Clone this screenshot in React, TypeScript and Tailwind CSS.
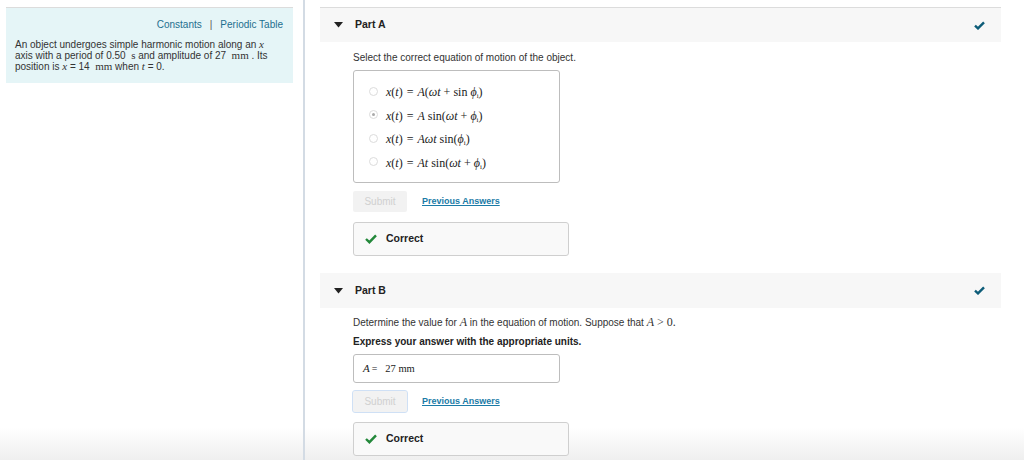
import React from "react";

const M = ({ children }: { children: React.ReactNode }) => (
  <span className="font-['Liberation_Serif','DejaVu_Serif',serif] text-[12px]">{children}</span>
);
const I = ({ children }: { children: React.ReactNode }) => <i>{children}</i>;
const Eq = () => <span className="mx-[4px]">=</span>;
const Plus = () => <span className="mx-[3px]">+</span>;

const Tri = () => (
  <svg width="9" height="6" viewBox="0 0 9 6" className="block">
    <path d="M0 0 L9 0 L4.5 5.5 Z" fill="#222" />
  </svg>
);

const TealCheck = () => (
  <svg width="11" height="9" viewBox="0 0 11 9" className="block">
    <path d="M1 4.6 L4 7.4 L10 1.4" fill="none" stroke="#0d5c78" strokeWidth="2.4" />
  </svg>
);

const GreenCheck = () => (
  <svg width="12" height="10" viewBox="0 0 12 10" className="block">
    <path d="M1 5 L4.4 8.2 L11 1.4" fill="none" stroke="#23883a" strokeWidth="2.4" />
  </svg>
);

const Radio = ({ checked }: { checked?: boolean }) => (
  <span className="inline-flex h-[9px] w-[9px] items-center justify-center rounded-full border border-[#dcdcdc] bg-white">
    {checked && <span className="h-[3px] w-[3px] rounded-full bg-[#aaa]" />}
  </span>
);

const PartHeader = ({ label, border }: { label: string; border?: boolean }) => (
  <div
    className={`flex h-[35px] items-center bg-[#f7f7f7] pl-[14px] pr-[16px] ${
      border ? "border-t border-[#dcdcdc]" : ""
    }`}
  >
    <Tri />
    <span className="ml-[12px] text-[10.5px] font-bold text-[#222]">{label}</span>
    <span className="ml-auto">
      <TealCheck />
    </span>
  </div>
);

const SubmitRow = ({ focus }: { focus?: boolean }) => (
  <div className="mt-[8px] flex items-center">
    <div
      className={`flex h-[21px] w-[54px] items-center justify-center rounded-[2px] bg-[#f2f2f2] text-[10px] text-[#d0d0d0] ${
        focus ? "outline outline-1 outline-[#cfe0f5]" : ""
      }`}
    >
      Submit
    </div>
    <span className="ml-[15px] text-[9px] font-bold text-[#1b7ba7] underline">Previous Answers</span>
  </div>
);

const CorrectBox = () => (
  <div className="mt-[10px] flex h-[34px] w-[216px] items-center rounded-[3px] border border-[#cfcfcf] bg-[#f9f9f9] pl-[11px]">
    <GreenCheck />
    <span className="ml-[9px] text-[10.5px] font-bold text-[#222]">Correct</span>
  </div>
);

const serif = "font-['Liberation_Serif',serif] text-[11px]";

export default function App() {
  return (
    <div className="flex h-[460px] w-[1024px] overflow-hidden bg-[linear-gradient(to_bottom,#ffffff_0,#ffffff_428px,#efefef_460px)] font-['Liberation_Sans',Arial,sans-serif] text-[#333]">
      <div className="w-[303px] shrink-0 pl-[6px] pr-[10px] pt-[7px]">
        <div className="border-t border-[#dcdcdc] bg-[#e5f5f7] pb-[11px] pl-[9px] pr-[10px] pt-[9px]">
          <div className="flex justify-end text-[10px] text-[#1e6f8e]">
            <span>Constants</span>
            <span className="mx-[8px] text-[#555]">|</span>
            <span>Periodic Table</span>
          </div>
          <div className="mt-[7px] text-[10px] leading-[11px] text-[#333]">
            An object undergoes simple harmonic motion along an <span className={`${serif} italic`}>x</span>
            <br />
            axis with a period of 0.50 <span className={serif}>&nbsp;s</span> and amplitude of 27{" "}
            <span className={serif}>&nbsp;mm</span> . Its
            <br />
            position is <span className={`${serif} italic`}>x</span> = 14 <span className={serif}>&nbsp;mm</span> when{" "}
            <span className={`${serif} italic`}>t</span> = 0.
          </div>
        </div>
      </div>
      <div className="w-[2px] shrink-0 bg-[#d3dbe4]" />
      <div className="flex-1 pl-[15px] pr-[23px] pt-[7px]">
        <PartHeader label="Part A" border />
        <div className="pl-[33px]">
          <div className="mt-[8px] text-[10px] text-[#333]">Select the correct equation of motion of the object.</div>
          <div className="mt-[5px] flex h-[113px] w-[207px] flex-col justify-center gap-[5.5px] rounded-[3px] border border-[#bdbdbd] pl-[15px]">
            {[
              <>
                <I>x</I>(<I>t</I>)<Eq /><I>A</I>(<I>ωt</I>
                <Plus />
                sin <I>ϕ</I>
                <sub className="text-[7px]">i</sub>)
              </>,
              <>
                <I>x</I>(<I>t</I>)<Eq /><I>A</I> sin(<I>ωt</I>
                <Plus />
                <I>ϕ</I>
                <sub className="text-[7px]">i</sub>)
              </>,
              <>
                <I>x</I>(<I>t</I>)<Eq /><I>Aωt</I> sin(<I>ϕ</I>
                <sub className="text-[7px]">i</sub>)
              </>,
              <>
                <I>x</I>(<I>t</I>)<Eq /><I>At</I> sin(<I>ωt</I>
                <Plus />
                <I>ϕ</I>
                <sub className="text-[7px]">i</sub>)
              </>,
            ].map((eq, i) => (
              <div key={i} className="flex h-[18px] items-center">
                <Radio checked={i === 1} />
                <span className="ml-[8px] text-[#222]">
                  <M>{eq}</M>
                </span>
              </div>
            ))}
          </div>
          <SubmitRow />
          <CorrectBox />
        </div>
        <div className="mt-[17px]">
          <PartHeader label="Part B" />
        </div>
        <div className="pl-[33px]">
          <div className="mt-[5px] flex items-baseline text-[10px] text-[#333]">
            <span>
              Determine the value for <span className="font-['Liberation_Serif',serif] text-[12px] italic">A</span> in
              the equation of motion. Suppose that{" "}
              <span className="font-['Liberation_Serif',serif] text-[12px]">
                <i>A</i> &gt; 0.
              </span>
            </span>
          </div>
          <div className="mt-[3px] text-[10px] font-bold text-[#222]">Express your answer with the appropriate units.</div>
          <div className="mt-[5px] flex h-[29px] w-[207px] items-center rounded-[3px] border border-[#bdbdbd] pl-[9px] text-[#222]">
            <span className="font-['Liberation_Serif',serif] text-[11px] italic">A</span>
            <span className="ml-[2px] text-[9.5px]">=</span>
            <span className="ml-[8px] font-['Liberation_Serif',serif] text-[10.5px]">27 mm</span>
          </div>
          <SubmitRow focus />
          <CorrectBox />
        </div>
      </div>
    </div>
  );
}
